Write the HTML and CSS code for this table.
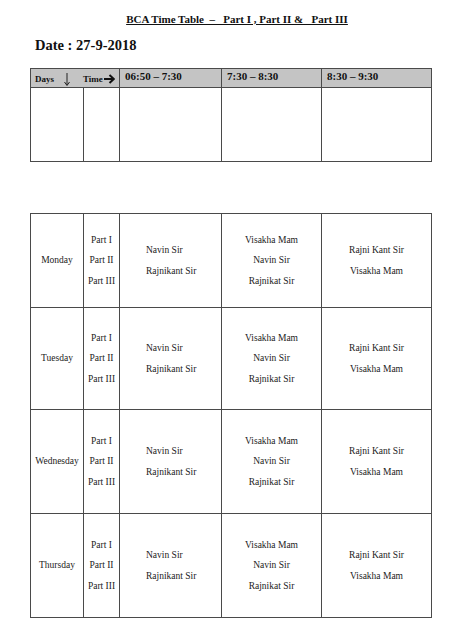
FILE: index.html
```html
<!DOCTYPE html>
<html>
<head>
<meta charset="utf-8">
<link rel="stylesheet" href="styles.css">
</head>
<body>
<div class="page">
  <div class="title">BCA Time Table  –   Part I , Part II &amp;   Part III</div>
  <div class="date">Date : 27-9-2018</div>
  <table class="tt top">
    <colgroup><col class="c1"><col class="c2"><col class="c3"><col class="c4"><col class="c5"></colgroup>
    <tr class="hdr">
      <th colspan="2" class="dt"><span class="days">Days</span><svg class="down" width="6" height="13" viewBox="0 0 6 13"><path d="M3 0 V12 M0.5 9 L3 12.5 L5.5 9" fill="none" stroke="#222" stroke-width="1"/></svg><span class="time">Time</span><svg class="right" width="11" height="10" viewBox="0 0 11 10"><path d="M0 5 H9.5 M5.5 1 L9.8 5 L5.5 9" fill="none" stroke="#111" stroke-width="2"/></svg></th>
      <th>06:50 – 7:30</th>
      <th>7:30 – 8:30</th>
      <th>8:30 – 9:30</th>
    </tr>
    <tr class="blank"><td></td><td></td><td></td><td></td><td></td></tr>
  </table>
  <table class="tt bottom">
    <colgroup><col class="c1"><col class="c2"><col class="c3"><col class="c4"><col class="c5"></colgroup>
    <tr class="r1">
      <td class="day">Monday</td>
      <td class="parts"><div>Part I</div><div>Part II</div><div>Part III</div></td>
      <td class="left"><div>Navin Sir</div><div>Rajnikant Sir</div></td>
      <td><div>Visakha Mam</div><div>Navin Sir</div><div>Rajnikat Sir</div></td>
      <td><div>Rajni Kant Sir</div><div>Visakha Mam</div></td>
    </tr>
    <tr class="r2">
      <td class="day">Tuesday</td>
      <td class="parts"><div>Part I</div><div>Part II</div><div>Part III</div></td>
      <td class="left"><div>Navin Sir</div><div>Rajnikant Sir</div></td>
      <td><div>Visakha Mam</div><div>Navin Sir</div><div>Rajnikat Sir</div></td>
      <td><div>Rajni Kant Sir</div><div>Visakha Mam</div></td>
    </tr>
    <tr class="r3">
      <td class="day">Wednesday</td>
      <td class="parts"><div>Part I</div><div>Part II</div><div>Part III</div></td>
      <td class="left"><div>Navin Sir</div><div>Rajnikant Sir</div></td>
      <td><div>Visakha Mam</div><div>Navin Sir</div><div>Rajnikat Sir</div></td>
      <td><div>Rajni Kant Sir</div><div>Visakha Mam</div></td>
    </tr>
    <tr class="r4">
      <td class="day">Thursday</td>
      <td class="parts"><div>Part I</div><div>Part II</div><div>Part III</div></td>
      <td class="left"><div>Navin Sir</div><div>Rajnikant Sir</div></td>
      <td><div>Visakha Mam</div><div>Navin Sir</div><div>Rajnikat Sir</div></td>
      <td><div>Rajni Kant Sir</div><div>Visakha Mam</div></td>
    </tr>
  </table>
</div>
</body>
</html>
```
FILE: styles.css
```css
html, body {
  margin: 0;
  padding: 0;
  background: #fff;
}
.page {
  width: 474px;
  height: 632px;
  font-family: "Liberation Serif", "Times New Roman", serif;
  color: #111;
  overflow: hidden;
}
.title {
  padding-top: 12px;
  text-align: center;
  font-size: 11px;
  font-weight: bold;
  line-height: 14px;
  white-space: pre;
  text-decoration: underline;
}
.date {
  margin-top: 10px;
  padding-left: 35px;
  font-size: 14.5px;
  font-weight: bold;
  line-height: 18px;
}
.tt {
  border-collapse: collapse;
  table-layout: fixed;
  margin-left: 30px;
  width: 401px;
}
.tt td, .tt th {
  border: 1px solid #4a4a4a;
  padding: 0;
}
.c1 { width: 53px; }
.c2 { width: 36px; }
.c3 { width: 102px; }
.c4 { width: 100px; }
.c5 { width: 110px; }
.top {
  margin-top: 14px;
}
.hdr th {
  background: #c4c4c4;
  height: 16px;
  text-align: left;
  vertical-align: top;
  font-size: 11px;
  line-height: 13px;
  padding-left: 5px;
  padding-top: 1px;
}
.hdr th.dt {
  padding-left: 4px;
  padding-top: 2px;
  font-size: 9px;
  vertical-align: middle;
  white-space: nowrap;
}
.days { display: inline-block; vertical-align: middle; }
.down {
  display: inline-block;
  margin-left: 10px;
  vertical-align: middle;
}
.time { display: inline-block; margin-left: 13px; vertical-align: middle; }
.right {
  display: inline-block;
  vertical-align: middle;
  margin-left: 1px;
}
.blank td { height: 73px; }
.bottom {
  margin-top: 51px;
}
.bottom td {
  text-align: center;
  vertical-align: middle;
  font-size: 9.5px;
  line-height: 20.5px;
  color: #222;
}
.bottom td.left {
  text-align: left;
  padding-left: 26px;
}
.r1 td { height: 93px; }
.r2 td { height: 101px; }
.r3 td { height: 103px; }
.r4 td { height: 103px; }
```
